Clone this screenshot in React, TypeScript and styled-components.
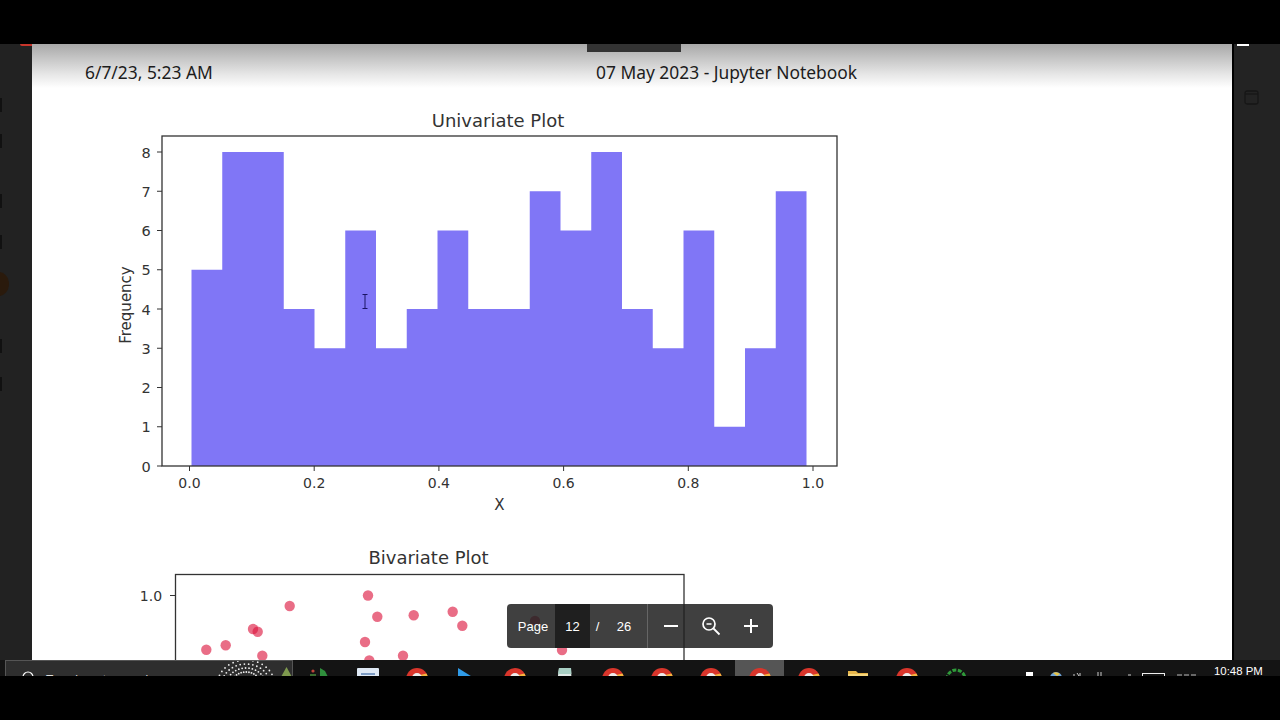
import React from "react";
import styled, { createGlobalStyle } from "styled-components";

const Global = createGlobalStyle`
  html, body { margin: 0; padding: 0; background: #000; }
  body { width: 1280px; height: 720px; overflow: hidden; font-family: "Noto Sans", "Liberation Sans", sans-serif; }
`;

const Screen = styled.div`
  position: relative;
  width: 1280px;
  height: 720px;
  background: #000;
  overflow: hidden;
`;
const TopBlack = styled.div`height: 44px; background: #000;`;
const Desktop = styled.div`display: flex; height: 616px;`;
const LeftRail = styled.aside`
  position: relative;
  width: 32px;
  flex: none;
  background: #222;
  overflow: hidden;
`;
const RedTab = styled.i`
  position: absolute; left: 20px; top: 0; width: 18px; height: 2px;
  background: #c8352b; border-radius: 0 0 6px 6px;
`;
const Blob = styled.i`
  position: absolute; left: -12px; top: 228px; width: 21px; height: 24px;
  border-radius: 50%; background: #2a1a0c;
`;
const RailMark = styled.i<{ $top: number }>`
  position: absolute; left: 0; top: ${p => p.$top}px; width: 2px; height: 14px; background: #111;
`;
const RightRail = styled.aside`
  position: relative;
  width: 48px;
  flex: none;
  background: #232323;
  border-left: 2px solid #000;
  box-sizing: border-box;
`;
const WhiteTab = styled.i`
  position: absolute; left: 3px; top: 0; width: 12px; height: 2px; background: #fff;
`;
const CalendarIcon = styled.svg`
  position: absolute; left: 10px; top: 45px; width: 16px; height: 16px;
`;
const Page = styled.main`
  position: relative;
  width: 1200px;
  flex: none;
  overflow: hidden;
  background: #fff linear-gradient(#a8a8a8, #e6e6e6 30px, #fff 44px) no-repeat;
  background-size: 100% 48px;
  color: #222;
`;
const DarkTab = styled.i`
  position: absolute; left: 555px; top: 0; width: 94px; height: 8px; background: #333;
`;
const PrintHeader = styled.header`
  display: flex;
  padding: 17px 0 0 53px;
  height: 22px;
  font-size: 17.4px;
  line-height: 22px;
  color: #1c1c1c;
  white-space: nowrap;
`;
const PrintDate = styled.span`width: 511px; flex: none;`;
const PrintTitle = styled.span``;
const PlotSvg = styled.svg`display: block; margin-left: 68px;`;
const Hist = styled(PlotSvg)`margin-top: 22px;`;
const Scatter = styled(PlotSvg)`margin-top: 33px;`;
const Pager = styled.div`
  position: absolute;
  left: 475px;
  top: 560px;
  width: 266px;
  height: 44px;
  display: flex;
  align-items: center;
  border-radius: 4px;
  overflow: hidden;
  background: rgba(30, 30, 30, 0.85);
  color: #fff;
  font-family: "Liberation Sans", Arial, sans-serif;
  font-size: 13px;
`;
const PageLabel = styled.span`
  width: 48px; flex: none; box-sizing: border-box; padding-left: 4px; text-align: center;
`;
const PageCell = styled.span`
  width: 35px; height: 44px; flex: none;
  display: flex; align-items: center; justify-content: center;
  background: #1f1f1f;
`;
const PageSlash = styled.span`width: 15px; flex: none; text-align: center;`;
const PageTotal = styled.span`width: 38px; flex: none; text-align: center;`;
const PagerDivider = styled.i`
  width: 1px; height: 44px; flex: none; background: #666; margin: 0 3px 0 4px;
`;
const PagerButton = styled.button`
  width: 40px; height: 44px; flex: none; padding: 0; border: 0;
  background: transparent; color: #fff;
  display: flex; align-items: center; justify-content: center;
`;
const Taskbar = styled.footer`
  position: relative;
  height: 16px;
  display: flex;
  background: #141414;
  overflow: visible;
`;
const SearchBox = styled.div`
  position: relative;
  margin-left: 5px;
  width: 288px;
  height: 16px;
  flex: none;
  background: #2e2e2e;
  border: solid #555;
  border-width: 1px 1px 0 1px;
  box-sizing: border-box;
  overflow: hidden;
`;
const SearchText = styled.span`
  position: absolute; left: 40px; top: 12px; color: #ddd; font-size: 12px;
  font-family: "Liberation Sans", sans-serif; line-height: 14px; white-space: nowrap;
`;
const SearchIcon = styled.svg`position: absolute; left: 15px; top: 10px; width: 14px; height: 14px;`;
const Dots = styled.svg`position: absolute; left: 210px; top: 0; width: 60px; height: 16px;`;
const Leaf = styled.svg`position: absolute; left: 275px; top: 6px; width: 11px; height: 10px;`;
const TaskIcons = styled.div`
  display: flex;
  margin-left: 1px;
  height: 16px;
  overflow: hidden;
`;
const TaskSlot = styled.div<{ $active?: boolean }>`
  width: 49px;
  height: 16px;
  flex: none;
  display: flex;
  justify-content: center;
  background: ${p => (p.$active ? "#555" : "transparent")};
`;
const TaskGlyph = styled.svg`display: block; margin-top: 8px; width: 22px; height: 22px; flex: none;`;
const Tray = styled.svg`position: absolute; left: 1020px; top: 0; width: 190px; height: 16px;`;
const Clock = styled.time`
  position: absolute; left: 1214px; top: 3px;
  color: #fff; font-size: 11.4px; line-height: 16px; white-space: nowrap;
  font-family: "Liberation Sans", sans-serif;
`;
const BottomBlack = styled.div`height: 44px; background: #000;`;

const bins = [5, 8, 8, 4, 3, 6, 3, 4, 6, 4, 4, 7, 6, 8, 4, 3, 6, 1, 3, 7];
const binW = 30.75;
const unit = 39.25;
const histPath = () => {
  let d = `M191.5 466`;
  bins.forEach((v, i) => {
    const y = 466 - v * unit;
    d += ` L${191.5 + i * binW} ${y} L${191.5 + (i + 1) * binW} ${y}`;
  });
  return d + ` L806.5 466 Z`;
};
const mpl = `"DejaVu Sans", sans-serif`;

const Histogram = () => (
  <Hist width="760" height="410" viewBox="100 105 760 410">
    <path d={histPath()} fill="#8076f6" />
    <rect x="162" y="136" width="675" height="330" fill="none" stroke="#333" strokeWidth="1.3" />
    {[0, 1, 2, 3, 4, 5, 6, 7, 8].map(v => (
      <g key={v}>
        <line x1="157" x2="162" y1={466 - v * unit} y2={466 - v * unit} stroke="#333" />
        <text x="146" y={466 - v * unit + 5.5} textAnchor="middle" fontFamily={mpl} fontSize="14.5" fill="#333">{v}</text>
      </g>
    ))}
    {["0.0", "0.2", "0.4", "0.6", "0.8", "1.0"].map((t, i) => (
      <g key={t}>
        <line x1={189.5 + i * 124.7} x2={189.5 + i * 124.7} y1="466" y2="471" stroke="#333" />
        <text x={189.5 + i * 124.7} y="488" textAnchor="middle" fontFamily={mpl} fontSize="14" fill="#333">{t}</text>
      </g>
    ))}
    <text x="498" y="126.5" textAnchor="middle" fontFamily={mpl} fontSize="18" fill="#333">Univariate Plot</text>
    <text x="499.5" y="510" textAnchor="middle" fontFamily={mpl} fontSize="15" fill="#333">X</text>
    <text transform="translate(131 305) rotate(-90)" textAnchor="middle" fontFamily={mpl} fontSize="15" fill="#333">Frequency</text>
    <path d="M362.5 294.5h5M365 294.5v14M362.5 308.5h5" stroke="#1b1464" fill="none" strokeWidth="1" />
  </Hist>
);

const dots: [number, number][] = [
  [289.7, 606], [368, 595.5], [377.3, 616.7], [413.7, 615.3], [452.7, 611.7], [462.3, 625.7],
  [365, 642], [403, 655.7], [369.3, 660.5], [262.3, 655.7], [225.7, 645.3], [206.3, 649.7],
  [253, 629], [257.7, 631.7], [535, 621], [562, 650],
];

const BivariatePlot = () => (
  <Scatter width="760" height="112" viewBox="100 548 760 112">
    <rect x="175.5" y="574.5" width="508.5" height="120" fill="none" stroke="#333" strokeWidth="1.3" />
    <line x1="170" x2="175.5" y1="595.5" y2="595.5" stroke="#333" />
    <text x="151" y="601" textAnchor="middle" fontFamily={mpl} fontSize="14" fill="#333">1.0</text>
    <text x="428.5" y="563.5" textAnchor="middle" fontFamily={mpl} fontSize="18" fill="#333">Bivariate Plot</text>
    {dots.map(([x, y]) => (
      <circle key={`${x}-${y}`} cx={x} cy={y} r="5.2" fill="#dc143c" fillOpacity="0.62" />
    ))}
  </Scatter>
);

const Chrome = () => (
  <TaskGlyph viewBox="0 0 22 22">
    <circle cx="11" cy="11" r="11" fill="#d9352b" />
    <path d="M14 7 L20.5 5.5 A11 11 0 0 1 22 11 L14 14 Z" fill="#f4b63f" />
    <circle cx="11" cy="10" r="5" fill="#ececec" />
  </TaskGlyph>
);

const taskIcons: React.ReactNode[] = [
  <TaskGlyph key="a" viewBox="0 0 22 22"><path d="M2 6h6v10H2z" fill="#3b6a2e" /><path d="M12 0l5 3 3 6H12z" fill="#2f8f3c" /><circle cx="5" cy="3" r="1.6" fill="#c0453a" /></TaskGlyph>,
  <TaskGlyph key="b" viewBox="0 0 22 22"><rect width="22" height="22" rx="1" fill="#dfe9f5" /><path d="M4 6h14M4 10h14" stroke="#7d9cc4" strokeWidth="2" /></TaskGlyph>,
  <Chrome key="c" />,
  <TaskGlyph key="d" viewBox="0 0 22 22"><path d="M3 0l16 10L3 22z" fill="#2f9be8" /></TaskGlyph>,
  <Chrome key="e" />,
  <TaskGlyph key="f" viewBox="0 0 22 22"><path d="M6 0h12l1 22H3z" fill="#dfe9e6" /><path d="M6 0h12l.4 6H5z" fill="#a8cfc4" /></TaskGlyph>,
  <Chrome key="g" />, <Chrome key="h" />, <Chrome key="i" />, <Chrome key="j" />, <Chrome key="k" />,
  <TaskGlyph key="l" viewBox="0 0 22 22"><path d="M1 3h8l2 2h10v17H1z" fill="#e8b64a" /><path d="M1 6h20v2H1z" fill="#f6d77d" /></TaskGlyph>,
  <Chrome key="m" />,
  <TaskGlyph key="n" viewBox="0 0 22 22"><circle cx="11" cy="11" r="9" fill="none" stroke="#2f9a3a" strokeWidth="3" strokeDasharray="4 1.5" /></TaskGlyph>,
];

const domeDots = Array.from({ length: 72 }).map((_, i) => {
  const row = i % 4;
  const a = Math.PI + ((i * 7) % 72) / 71 * Math.PI;
  const r = 13 + row * 4;
  return { x: 30 + Math.cos(a) * r * 1.15, y: 24 + Math.sin(a) * r };
});

export default function App() {
  return (
    <Screen>
      <Global />
      <TopBlack />
      <Desktop>
        <LeftRail>
          <RedTab />
          <Blob />
          <RailMark $top={54} />
          <RailMark $top={90} />
          <RailMark $top={150} />
          <RailMark $top={191} />
          <RailMark $top={295} />
          <RailMark $top={333} />
        </LeftRail>
        <Page>
          <DarkTab />
          <PrintHeader>
            <PrintDate>6/7/23, 5:23 AM</PrintDate>
            <PrintTitle>07 May 2023 - Jupyter Notebook</PrintTitle>
          </PrintHeader>
          <Histogram />
          <BivariatePlot />
          <Pager>
            <PageLabel>Page</PageLabel>
            <PageCell>12</PageCell>
            <PageSlash>/</PageSlash>
            <PageTotal>26</PageTotal>
            <PagerDivider />
            <PagerButton aria-label="Zoom out">
              <svg width="16" height="16" viewBox="0 0 16 16"><path d="M1 8h14" stroke="#fff" strokeWidth="2" /></svg>
            </PagerButton>
            <PagerButton aria-label="Fit">
              <svg width="20" height="20" viewBox="0 0 20 20" fill="none" stroke="#fff">
                <circle cx="8" cy="8" r="6" strokeWidth="1.7" />
                <path d="M5.5 8h5" strokeWidth="1.4" />
                <path d="M12.5 12.5l6 6" strokeWidth="1.8" />
              </svg>
            </PagerButton>
            <PagerButton aria-label="Zoom in">
              <svg width="16" height="16" viewBox="0 0 16 16"><path d="M1 8h14M8 1v14" stroke="#fff" strokeWidth="2" /></svg>
            </PagerButton>
          </Pager>
        </Page>
        <RightRail>
          <WhiteTab />
          <CalendarIcon viewBox="0 0 16 16" fill="none" stroke="#161616" strokeWidth="1.3">
            <rect x="1" y="2" width="13" height="13" rx="2" />
            <path d="M1 5h13" />
          </CalendarIcon>
        </RightRail>
      </Desktop>
      <Taskbar>
        <SearchBox>
          <SearchIcon viewBox="0 0 14 14" fill="none" stroke="#fff" strokeWidth="1.2"><circle cx="7" cy="6" r="5" /></SearchIcon>
          <SearchText>Type here to search</SearchText>
          <Dots viewBox="0 0 60 16">
            {domeDots.map((d, i) => <circle key={i} cx={d.x} cy={d.y} r="0.9" fill="#eee" />)}
          </Dots>
          <Leaf viewBox="0 0 11 10"><path d="M5.5 0L11 10H0z" fill="#7f9a4e" /></Leaf>
        </SearchBox>
        <TaskIcons>
          {taskIcons.map((icon, i) => (
            <TaskSlot key={i} $active={i === 9}>{icon}</TaskSlot>
          ))}
        </TaskIcons>
        <Tray viewBox="0 0 190 16">
          <rect x="6" y="12" width="7" height="4" fill="#fff" />
          <circle cx="36" cy="18" r="6" fill="#6ea3d8" />
          <path d="M33 13a6 6 0 0 1 7 1l-3 2z" fill="#e5c34a" />
          <path d="M54 14v2M57 13l2 3M60 13v3" stroke="#ccc" fill="none" />
          <path d="M78 12v4M81 12v4" stroke="#ccc" />
          <path d="M108 15h3" stroke="#ccc" />
          <rect x="122.5" y="13.5" width="22" height="6" fill="none" stroke="#eee" />
          <path d="M157 15h21" stroke="#bbb" strokeDasharray="5 2" />
        </Tray>
        <Clock>10:48 PM</Clock>
      </Taskbar>
      <BottomBlack />
    </Screen>
  );
}
